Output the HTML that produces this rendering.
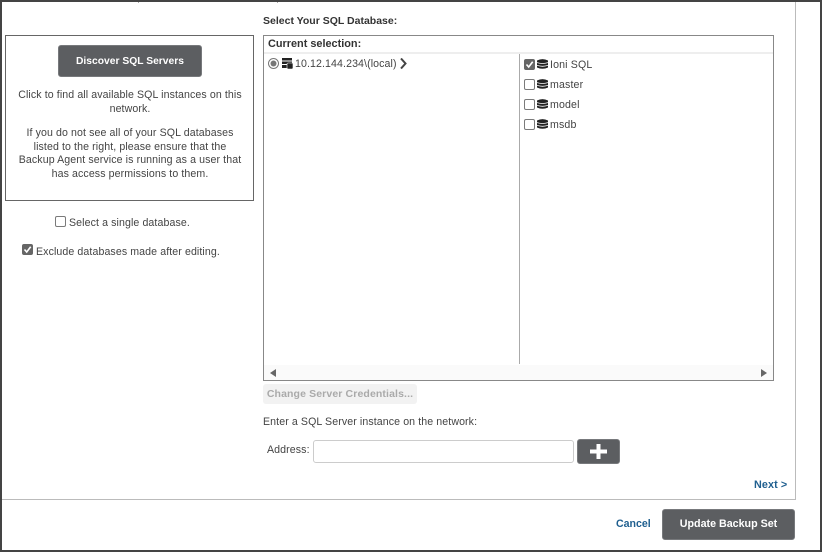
<!DOCTYPE html>
<html><head><meta charset="utf-8"><style>
html,body{margin:0;padding:0;background:#fff}
body{position:relative;width:822px;height:552px;overflow:hidden;font-family:"Liberation Sans",sans-serif;font-size:10.6px;color:#444}
#w{position:absolute;left:0;top:0;width:822px;height:552px;filter:blur(.3px)}
.a{position:absolute;white-space:nowrap}
.c{position:absolute;text-align:center;white-space:nowrap;letter-spacing:.1px}
.b{position:absolute;background:#5c5e61;border-radius:3px;color:#fff;font-weight:bold;text-align:center;border:1px solid #77797c;box-sizing:border-box}
.cb{position:absolute;width:11px;height:11px;border:1px solid #7a7a7a;border-radius:2px;box-sizing:border-box;background:#fff}
.cb.on{background:#666;border-color:#666}
.cb.on svg{position:absolute;left:0;top:0}
.db{position:absolute;width:11px;height:10px}
</style></head><body><div id="w">
<div class="a" style="left:0;top:0;width:822px;height:552px;box-sizing:border-box;border:2px solid #444"></div>
<div class="a" style="left:138px;top:2px;width:1px;height:1px;background:#aaa"></div>
<div class="a" style="left:277px;top:2px;width:1px;height:1px;background:#aaa"></div>
<div class="a" style="left:795px;top:2px;width:1px;height:498px;background:#bbb"></div>
<div class="a" style="left:2px;top:499px;width:794px;height:1px;background:#bbb"></div>

<div class="a" style="left:5px;top:35px;width:249px;height:166px;box-sizing:border-box;border:1px solid #666"></div>
<div class="b" style="left:58px;top:45px;width:144px;height:32px;line-height:31px;font-size:10.3px">Discover SQL Servers</div>
<div class="c" style="left:6px;width:248px;top:88px;line-height:14px">Click to find all available SQL instances on this<br>network.</div>
<div class="c" style="left:6px;width:248px;top:127px;line-height:13.7px">If you do not see all of your SQL databases<br>listed to the right, please ensure that the<br>Backup Agent service is running as a user that<br>has access permissions to them.</div>
<div class="cb" style="left:55px;top:216px"></div>
<div class="a" style="left:69px;top:216px;line-height:14px;letter-spacing:.1px">Select a single database.</div>
<div class="cb on" style="left:22px;top:244px"><svg width="9" height="9" viewBox="0 0 9 9"><path d="M1.5 4.5L3.7 7L7.7 1.8" fill="none" stroke="#fff" stroke-width="1.6"/></svg></div>
<div class="a" style="left:36px;top:245px;line-height:14px;letter-spacing:.1px">Exclude databases made after editing.</div>

<div class="a" style="left:263px;top:14px;font-weight:bold;font-size:10.5px;line-height:14px;color:#333">Select Your SQL Database:</div>
<div class="a" style="left:263px;top:35px;width:511px;height:346px;box-sizing:border-box;border:1px solid #888"></div>
<div class="a" style="left:264px;top:52px;width:509px;height:2px;background:#eee"></div>
<div class="a" style="left:268px;top:37px;font-weight:bold;font-size:10.9px;line-height:14px;color:#333">Current selection:</div>
<div class="a" style="left:519px;top:54px;width:1px;height:310px;background:#aaa"></div>
<div class="a" style="left:264px;top:365px;width:509px;height:15px;background:#fafafa"></div>
<svg class="a" style="left:270px;top:369px" width="7" height="8"><path d="M6 0V8L0 4Z" fill="#666"/></svg>
<svg class="a" style="left:761px;top:369px" width="7" height="8"><path d="M0 0V8L6 4Z" fill="#666"/></svg>

<svg class="a" style="left:268px;top:58px" width="12" height="12"><circle cx="5.5" cy="5.5" r="5" fill="#fff" stroke="#777"/><circle cx="5.5" cy="5.5" r="3" fill="#777"/></svg>
<svg class="a" style="left:282px;top:58px" width="11" height="12"><path d="M0 0H10V2.5H0ZM0 3.5H10V6H0ZM0 7H5V10H0Z" fill="#222"/><rect x="5" y="5" width="6" height="6" rx="1" fill="#222" stroke="#fff" stroke-width=".6"/></svg>
<div class="a" style="left:295px;top:57px;line-height:14px;letter-spacing:.1px">10.12.144.234\(local)</div>
<svg class="a" style="left:400px;top:58px" width="7" height="11"><path d="M1 0.5L5.5 5.5L1 10.5" fill="none" stroke="#444" stroke-width="2"/></svg>

<div class="cb on" style="left:524px;top:59px"><svg width="9" height="9" viewBox="0 0 9 9"><path d="M1.5 4.5L3.7 7L7.7 1.8" fill="none" stroke="#fff" stroke-width="1.6"/></svg></div>
<svg class="db" style="left:537px;top:59px" viewBox="0 0 11 10"><path d="M0 1.5Q5.5-1.2 11 1.5V3.2Q5.5 5 0 3.2ZM0 4Q5.5 5.8 11 4V6Q5.5 7.8 0 6ZM0 6.8Q5.5 8.6 11 6.8V8.5Q5.5 11 0 8.5Z" fill="#222"/></svg>
<div class="a" style="left:550px;top:58px;line-height:14px;letter-spacing:.15px">Ioni SQL</div>
<div class="cb" style="left:524px;top:79px"></div>
<svg class="db" style="left:537px;top:79px" viewBox="0 0 11 10"><path d="M0 1.5Q5.5-1.2 11 1.5V3.2Q5.5 5 0 3.2ZM0 4Q5.5 5.8 11 4V6Q5.5 7.8 0 6ZM0 6.8Q5.5 8.6 11 6.8V8.5Q5.5 11 0 8.5Z" fill="#222"/></svg>
<div class="a" style="left:550px;top:78px;line-height:14px;letter-spacing:.15px">master</div>
<div class="cb" style="left:524px;top:99px"></div>
<svg class="db" style="left:537px;top:99px" viewBox="0 0 11 10"><path d="M0 1.5Q5.5-1.2 11 1.5V3.2Q5.5 5 0 3.2ZM0 4Q5.5 5.8 11 4V6Q5.5 7.8 0 6ZM0 6.8Q5.5 8.6 11 6.8V8.5Q5.5 11 0 8.5Z" fill="#222"/></svg>
<div class="a" style="left:550px;top:98px;line-height:14px;letter-spacing:.15px">model</div>
<div class="cb" style="left:524px;top:119px"></div>
<svg class="db" style="left:537px;top:119px" viewBox="0 0 11 10"><path d="M0 1.5Q5.5-1.2 11 1.5V3.2Q5.5 5 0 3.2ZM0 4Q5.5 5.8 11 4V6Q5.5 7.8 0 6ZM0 6.8Q5.5 8.6 11 6.8V8.5Q5.5 11 0 8.5Z" fill="#222"/></svg>
<div class="a" style="left:550px;top:118px;line-height:14px;letter-spacing:.15px">msdb</div>

<div class="a" style="left:263px;top:384px;width:154px;height:20px;background:#f2f2f2;border-radius:3px;color:#aaa;font-weight:bold;font-size:10.5px;line-height:20px;text-align:center;letter-spacing:.12px">Change Server Credentials...</div>
<div class="a" style="left:263px;top:415px;line-height:14px;letter-spacing:.1px">Enter a SQL Server instance on the network:</div>
<div class="a" style="left:267px;top:443px;line-height:14px;letter-spacing:.1px">Address:</div>
<div class="a" style="left:313px;top:440px;width:261px;height:23px;box-sizing:border-box;border:1px solid #ccc;border-radius:3px;background:#fff"></div>
<div class="b" style="left:577px;top:439px;width:43px;height:25px"></div>
<svg class="a" style="left:590px;top:444px" width="17" height="15"><path d="M6.5 0H10.5V5.5H17V9.5H10.5V15H6.5V9.5H0V5.5H6.5Z" fill="#fff"/></svg>

<div class="a" style="left:754px;top:478px;font-weight:bold;font-size:10.8px;line-height:14px;color:#1f5f8f;letter-spacing:.1px">Next &gt;</div>
<div class="a" style="left:616px;top:517px;font-weight:bold;font-size:10.6px;line-height:14px;color:#1f5f8f;letter-spacing:0">Cancel</div>
<div class="b" style="left:662px;top:509px;width:133px;height:31px;line-height:29px;font-size:10.7px">Update Backup Set</div>
</div></body></html>
